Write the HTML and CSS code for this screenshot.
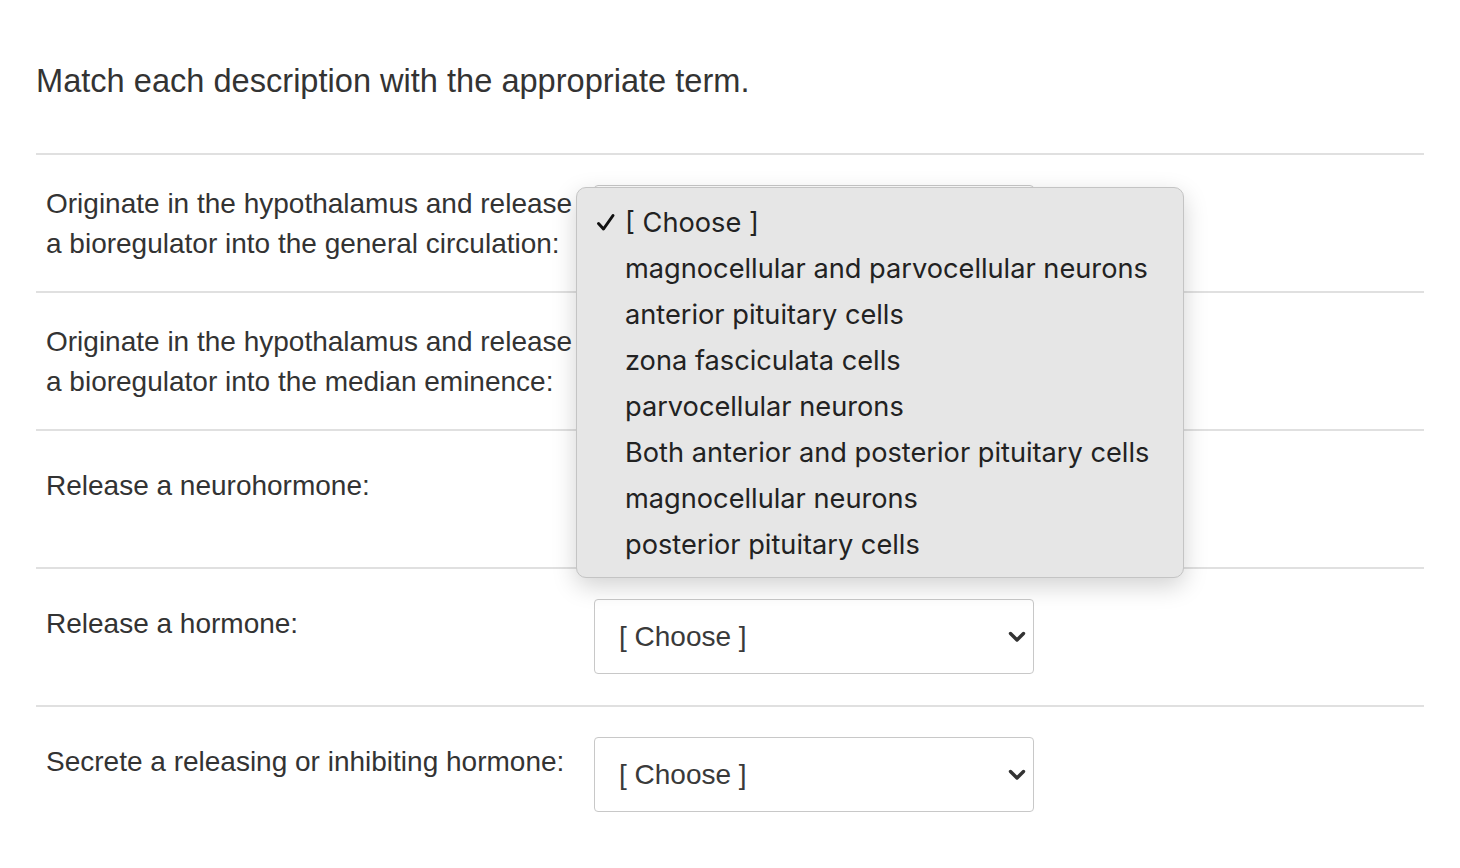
FILE: index.html
```html
<!DOCTYPE html>
<html lang="en">

<head>
    <meta charset="UTF-8">
    <title>Matching Question</title>
    <link rel="stylesheet" href="styles.css">
</head>

<body>
    <div class="quiz">
        <p class="prompt">Match each description with the appropriate term.</p>

        <div class="answers">
            <div class="answer">
                <div class="label">Originate in the hypothalamus and release a bioregulator into the general circulation:</div>
                <div class="select">
                    <span>[ Choose ]</span>
                    <svg class="chevron" width="18" height="12" viewBox="0 0 18 12"><path d="M2.5 2.5 L9 9 L15.5 2.5" fill="none" stroke="#333" stroke-width="3.4" stroke-linecap="round" stroke-linejoin="round"/></svg>
                </div>
            </div>
            <div class="answer">
                <div class="label">Originate in the hypothalamus and release a bioregulator into the median eminence:</div>
                <div class="select">
                    <span>[ Choose ]</span>
                    <svg class="chevron" width="18" height="12" viewBox="0 0 18 12"><path d="M2.5 2.5 L9 9 L15.5 2.5" fill="none" stroke="#333" stroke-width="3.4" stroke-linecap="round" stroke-linejoin="round"/></svg>
                </div>
            </div>
            <div class="answer">
                <div class="label single">Release a neurohormone:</div>
                <div class="select">
                    <span>[ Choose ]</span>
                    <svg class="chevron" width="18" height="12" viewBox="0 0 18 12"><path d="M2.5 2.5 L9 9 L15.5 2.5" fill="none" stroke="#333" stroke-width="3.4" stroke-linecap="round" stroke-linejoin="round"/></svg>
                </div>
            </div>
            <div class="answer">
                <div class="label single">Release a hormone:</div>
                <div class="select">
                    <span>[ Choose ]</span>
                    <svg class="chevron" width="18" height="12" viewBox="0 0 18 12"><path d="M2.5 2.5 L9 9 L15.5 2.5" fill="none" stroke="#333" stroke-width="3.4" stroke-linecap="round" stroke-linejoin="round"/></svg>
                </div>
            </div>
            <div class="answer">
                <div class="label single">Secrete a releasing or inhibiting hormone:</div>
                <div class="select">
                    <span>[ Choose ]</span>
                    <svg class="chevron" width="18" height="12" viewBox="0 0 18 12"><path d="M2.5 2.5 L9 9 L15.5 2.5" fill="none" stroke="#333" stroke-width="3.4" stroke-linecap="round" stroke-linejoin="round"/></svg>
                </div>
            </div>
        </div>

        <ul class="menu">
            <li class="checked">
                <svg class="tick" width="20" height="20" viewBox="0 0 20 20"><path d="M2.5 10.5 L7.5 16 L17 2.5" fill="none" stroke="#111" stroke-width="3" stroke-linecap="round" stroke-linejoin="round"/></svg>
                [ Choose ]
            </li>
            <li>magnocellular and parvocellular neurons</li>
            <li>anterior pituitary cells</li>
            <li>zona fasciculata cells</li>
            <li>parvocellular neurons</li>
            <li>Both anterior and posterior pituitary cells</li>
            <li>magnocellular neurons</li>
            <li>posterior pituitary cells</li>
        </ul>
    </div>
</body>

</html>
```

FILE: styles.css
```css
body {
    margin: 0;
    background: white;
    font-family: "Liberation Sans", Arial, sans-serif;
    color: #333;
}

.quiz {
    position: relative;
    padding: 0 36px;
}

.prompt {
    margin: 0;
    padding: 62px 0 53px;
    font-size: 32.6px;
    line-height: 38px;
}

.answer {
    display: flex;
    height: 136px;
    border-top: 2px solid #e0e0e0;
}

.label {
    width: 538px;
    padding: 29px 0 0 10px;
    font-size: 28px;
    line-height: 40px;
}

.label.single {
    padding-top: 35px;
}

.select {
    box-sizing: border-box;
    width: 440px;
    height: 75px;
    margin-top: 30px;
    margin-left: 10px;
    padding: 0 7px 0 24px;
    border: 1px solid #c8c8c8;
    border-radius: 4px;
    display: flex;
    align-items: center;
    justify-content: space-between;
    font-size: 28px;
    color: #3a3a3a;
}

.menu {
    position: absolute;
    left: 576px;
    top: 187px;
    width: 608px;
    box-sizing: border-box;
    margin: 0;
    padding: 12px 0 9px 48px;
    list-style: none;
    background: #e6e6e6;
    border: 1px solid #c4c4c4;
    border-radius: 10px;
    box-shadow: 0 8px 24px rgba(0, 0, 0, 0.18);
    font-family: Inter, "Liberation Sans", sans-serif;
    font-size: 27.2px;
    color: #222;
}

.menu li {
    position: relative;
    height: 46px;
    line-height: 46px;
}

.tick {
    position: absolute;
    left: -29px;
    top: 13px;
}
```
